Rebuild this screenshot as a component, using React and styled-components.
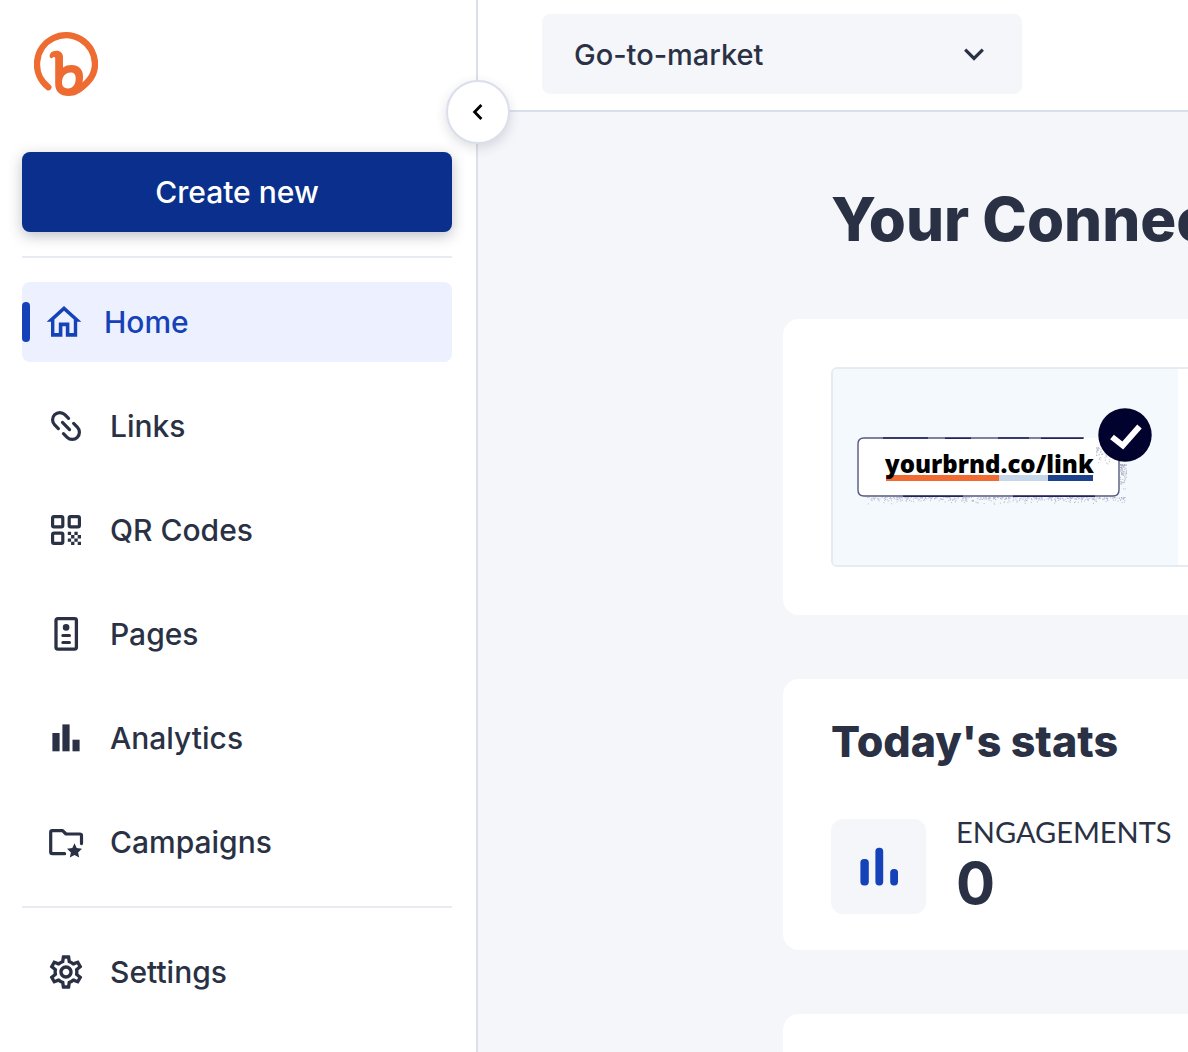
import React from 'react'
import styled, { createGlobalStyle, css } from 'styled-components'
import { MdOutlineSettings } from 'react-icons/md'

const INK = '#2a3144'
const BLUE = '#1542b8'

const LogoIcon = () => (
    <svg width="64" height="64" viewBox="0 0 64 64" aria-hidden="true">
        <path d="M14.3 55.2A29 29 0 1 1 61 32C61 43 54 51.5 44 57.5" fill="none" stroke="#ee6b31" strokeWidth="6.4" strokeLinecap="round" />
        <path
            fill="#ee6b31"
            fillRule="evenodd"
            d="M17.6 26.2C15.6 26.2 15.3 23.8 16 22.2C17.2 19.6 19.6 18.7 22.3 18.7C26.6 18.7 29 21.2 29 25V35.6C31.4 33.8 34.2 33 37.6 33C44.6 33 49 37.2 49 44.4C49 47.4 48.7 50 48 52.6L52.5 55C47.5 60.6 41.6 64 34.6 64C26 64 21.2 59.6 21.2 52V26.6C21.2 25.2 20.6 24.8 19.6 25C18.8 25.2 18.4 26.2 17.6 26.2ZM36.6 40.6C31.4 40.6 28 44.8 28 50.6C28 54.6 30.2 56.4 34 56.4C39 56.4 41.7 52 41.7 46.4C41.7 42.6 40 40.6 36.6 40.6Z"
        />
    </svg>
)

const HomeIcon = () => (
    <svg width="40" height="40" viewBox="0 0 40 40" aria-hidden="true">
        <path
            fill="currentColor"
            fillRule="evenodd"
            d="M20 4L2.6 19.8H7V34.7H18.4V24.2H21.8V34.7H33.2V19.8H37.4ZM20 8.7L29.8 17.4V31.1H25.4V20.4H14.8V31.1H10.4V17.4Z"
        />
    </svg>
)

const LinkIcon = () => (
    <svg width="40" height="40" viewBox="-20 -20 40 40" fill="none" stroke="currentColor" strokeWidth="3.2" strokeLinecap="round" aria-hidden="true">
        <g transform="rotate(45)">
            <path d="M-3.6 -7.2H-8.8A7.2 7.2 0 0 0 -8.8 7.2H-3.6" />
            <path d="M3.6 -7.2H8.8A7.2 7.2 0 0 1 8.8 7.2H3.6" />
            <path d="M-5 0H5" />
        </g>
    </svg>
)

const QrIcon = () => (
    <svg width="40" height="40" viewBox="0 0 40 40" aria-hidden="true">
        <g fill="none" stroke="currentColor" strokeWidth="3.2">
            <rect x="6.6" y="6.6" width="10.2" height="10.2" rx="1.4" />
            <rect x="23.2" y="6.6" width="10.2" height="10.2" rx="1.4" />
            <rect x="6.6" y="23.2" width="10.2" height="10.2" rx="1.4" />
        </g>
        <path
            fill="currentColor"
            d="M21.8 21.8h3.3v3.3h-3.3zM28.4 21.8h3.3v3.3h-3.3zM25.1 25.1h3.3v3.3h-3.3zM31.7 25.1h3.3v3.3h-3.3zM21.8 28.4h3.3v3.3h-3.3zM28.4 28.4h3.3v3.3h-3.3zM25.1 31.7h3.3v3.3h-3.3zM31.7 31.7h3.3v3.3h-3.3z"
        />
    </svg>
)

const PagesIcon = () => (
    <svg width="40" height="40" viewBox="0 0 40 40" fill="none" stroke="currentColor" strokeWidth="3.3" aria-hidden="true">
        <rect x="10" y="4.7" width="20.4" height="30.4" rx="1.8" />
        <circle cx="20.1" cy="13.4" r="3.3" fill="currentColor" stroke="none" />
        <path d="M16.8 21.4H23.5M16.8 28.4H23.5" strokeWidth="3" strokeLinecap="round" />
    </svg>
)

const AnalyticsIcon = () => (
    <svg width="40" height="40" viewBox="0 0 40 40" fill="currentColor" aria-hidden="true">
        <rect x="6.4" y="15" width="7.2" height="18.3" />
        <rect x="16.4" y="6.4" width="7.2" height="26.9" />
        <rect x="26.5" y="21.7" width="7.1" height="11.6" />
    </svg>
)

const CampaignsIcon = () => (
    <svg width="40" height="40" viewBox="0 0 40 40" aria-hidden="true">
        <path
            d="M18.6 31.7H6.4Q4.7 31.7 4.7 30V10.3Q4.7 8.6 6.4 8.6H16.6L20 12H33.8Q35.5 12 35.5 13.7V21.6"
            fill="none"
            stroke="currentColor"
            strokeWidth="3.2"
            strokeLinecap="round"
            strokeLinejoin="round"
        />
        <path fill="currentColor" d="M28.5 21.2L30.7 26.1L36 26.7L32.1 30.4L33.2 35.6L28.5 33L23.8 35.6L24.9 30.4L21 26.7L26.3 26.1Z" />
    </svg>
)

const EngagementIcon = () => (
    <svg width="40" height="40" viewBox="0 0 40 40" fill={BLUE} aria-hidden="true">
        <rect x="1.4" y="12" width="8.4" height="26.4" rx="3.6" />
        <rect x="16.4" y="0.8" width="7.8" height="37.6" rx="3.6" />
        <rect x="31.2" y="22" width="7.8" height="16.4" rx="3.6" />
    </svg>
)

// stippled shadow, seeded so it looks the same on each render
const makeDots = (count, left, top, width, height, seed) => {
    let s = seed
    const rand = () => {
        s = (s * 16807) % 2147483647
        return s / 2147483647
    }
    return Array.from({ length: count }, () => [left + rand() * width, top + rand() * rand() * height])
}

const dots = [
    ...makeDots(420, 34, 128, 258, 7, 77),
    ...makeDots(90, 287, 95, 6, 36, 913),
    ...makeDots(70, 263, 78, 14, 20, 41),
]

const LinkIllustration = () => (
    <svg width="345" height="196" viewBox="0 0 345 196" role="img" aria-label="yourbrnd.co/link">
        <path d="M31 69H280Q286 69 286 75V121Q286 127 280 127H31Q25 127 25 121V75Q25 69 31 69Z" fill="#fff" />
        <path d="M251 69H31Q25 69 25 75V121Q25 127 31 127H280Q286 127 286 121V84" fill="none" stroke="#55577f" strokeWidth="1.4" />
        <path d="M50 69H95M112 69.2H138M165 69H196M208 69.2H250M70 127.2H130M180 127.2H262" stroke="#22245a" strokeWidth="1.5" />
        <g fill="#03053a" opacity="0.3">
            {dots.map(([x, y], i) => (
                <rect key={i} x={x} y={y} width="0.9" height="0.9" />
            ))}
        </g>
        <rect x="53" y="106" width="113" height="6" fill="#f26b32" />
        <rect x="166" y="106" width="49" height="6" fill="#c5d6e8" />
        <rect x="215" y="106" width="45" height="6" fill="#1c428b" />
        <Brand x="52" y="104">yourbrnd.co/link</Brand>
        <circle cx="292" cy="66" r="26.7" fill="#02022f" />
        <path d="M279 68L289.8 76.5L306.5 57.5" fill="none" stroke="#fff" strokeWidth="6" />
    </svg>
)

const navItems = [
    { name: 'Home', icon: HomeIcon, active: true },
    { name: 'Links', icon: LinkIcon },
    { name: 'QR Codes', icon: QrIcon },
    { name: 'Pages', icon: PagesIcon },
    { name: 'Analytics', icon: AnalyticsIcon },
    { name: 'Campaigns', icon: CampaignsIcon },
]

export default function App() {
    return (
        <Layout>
            <GlobalStyle />
            <Sidebar>
                <LogoLink href="#" aria-label="Bitly">
                    <LogoIcon />
                </LogoLink>
                <ToggleButton type="button" aria-label="Collapse menu">
                    <svg width="16" height="20" viewBox="0 0 16 20" fill="none" stroke="#000" strokeWidth="2.8" aria-hidden="true">
                        <path d="M11.4 3L4.6 10L11.4 17" />
                    </svg>
                </ToggleButton>
                <CreateButton type="button">Create new</CreateButton>
                <Divider />
                <Nav>
                    {navItems.map(({ name, icon: Icon, active }) => (
                        <NavLink key={name} href="#" $active={active}>
                            <Icon />
                            {name}
                        </NavLink>
                    ))}
                </Nav>
                <Divider />
                <Nav>
                    <NavLink href="#">
                        <MdOutlineSettings size={40} />
                        Settings
                    </NavLink>
                </Nav>
            </Sidebar>
            <Main>
                <TopBar>
                    <SelectWrapper>
                        <GroupSelect aria-label="Group" defaultValue="gtm">
                            <option value="gtm">Go-to-market</option>
                        </GroupSelect>
                        <svg width="24" height="24" viewBox="0 0 24 24" fill="none" stroke={INK} strokeWidth="3.2" aria-hidden="true">
                            <path d="M3.2 7.6L12 16.4L20.8 7.6" />
                        </svg>
                    </SelectWrapper>
                </TopBar>
                <Content>
                    <PageTitle>Your Connections Platform</PageTitle>
                    <Card>
                        <Promo>
                            <PromoPicture>
                                <LinkIllustration />
                            </PromoPicture>
                        </Promo>
                    </Card>
                    <Card $compact>
                        <CardTitle>Today's stats</CardTitle>
                        <Stat>
                            <StatIcon>
                                <EngagementIcon />
                            </StatIcon>
                            <div>
                                <StatLabel>ENGAGEMENTS</StatLabel>
                                <StatValue>0</StatValue>
                            </div>
                        </Stat>
                    </Card>
                    <Card />
                </Content>
            </Main>
        </Layout>
    )
}

const GlobalStyle = createGlobalStyle`
    *, *::before, *::after {
        box-sizing: border-box;
    }
    body {
        margin: 0;
        background: #f4f6fa;
        color: ${INK};
        font-family: Inter, "Open Sans", sans-serif;
    }
    button, select {
        font-family: inherit;
    }
    h1, h2, p {
        margin: 0;
    }
    svg {
        display: block;
        flex: none;
    }
`

const Layout = styled.div`
    display: flex;
    height: 100vh;
    overflow: hidden;
`

const Sidebar = styled.aside`
    position: relative;
    z-index: 1;
    flex: none;
    width: 478px;
    padding: 32px 24px 0 22px;
    background: #fff;
    border-right: 2px solid #dbdfeb;
`

const LogoLink = styled.a`
    display: block;
    width: 64px;
    margin: 0 0 56px 12px;
`

const ToggleButton = styled.button`
    position: absolute;
    top: 80px;
    right: -34px;
    display: flex;
    align-items: center;
    justify-content: center;
    width: 64px;
    height: 64px;
    padding: 0;
    background: #fff;
    border: 2px solid #dbdfeb;
    border-radius: 50%;
    box-shadow: 0 4px 12px rgba(42, 49, 68, 0.16);
`

const CreateButton = styled.button`
    display: block;
    width: 100%;
    height: 80px;
    padding: 0;
    background: #0a2f8c;
    color: #fff;
    border: 0;
    border-radius: 8px;
    box-shadow: 0 4px 14px rgba(42, 49, 68, 0.3);
    font-size: 30px;
    font-weight: 500;
    line-height: 40px;
`

const Divider = styled.hr`
    height: 2px;
    margin: 24px 0;
    background: #e8ebf2;
    border: 0;
`

const Nav = styled.nav`
    display: flex;
    flex-direction: column;
    gap: 24px;
`

const NavLink = styled.a`
    position: relative;
    display: flex;
    align-items: center;
    gap: 24px;
    height: 80px;
    padding-left: 24px;
    border-radius: 8px;
    color: ${INK};
    font-size: 30px;
    font-weight: 500;
    line-height: 40px;
    text-decoration: none;
    ${({ $active }) => $active && css`
        gap: 20px;
        padding-left: 22px;
        background: #edf1ff;
        color: ${BLUE};
        &::before {
            content: '';
            position: absolute;
            left: 0;
            width: 8px;
            height: 40px;
            background: ${BLUE};
            border-radius: 4px;
        }
    `}
`

const Main = styled.main`
    flex: 1;
    min-width: 0;
    overflow: hidden;
`

const TopBar = styled.header`
    height: 112px;
    padding: 14px 64px;
    background: #fff;
    border-bottom: 2px solid #dbdfeb;
`

const SelectWrapper = styled.div`
    position: relative;
    max-width: 480px;
    svg {
        position: absolute;
        top: 28px;
        right: 36px;
        pointer-events: none;
    }
`

const GroupSelect = styled.select`
    appearance: none;
    width: 100%;
    height: 80px;
    padding: 0 72px 0 32px;
    background: #f4f6fa;
    color: ${INK};
    border: 0;
    border-radius: 8px;
    font-size: 29px;
    font-weight: 500;
`

const Content = styled.div`
    display: flex;
    flex-direction: column;
    gap: 64px;
    min-width: 1600px;
    padding: 71px 305px;
`

const PageTitle = styled.h1`
    padding-left: 48px;
    font-size: 60px;
    font-weight: 800;
    line-height: 72px;
    white-space: nowrap;
`

const Card = styled.section`
    min-height: 240px;
    padding: ${({ $compact }) => ($compact ? '32px 48px 28px' : '48px')};
    background: #fff;
    border-radius: 16px;
`

const Promo = styled.div`
    display: flex;
    border: 2px solid #e6ebf2;
    border-radius: 6px;
    overflow: hidden;
`

const PromoPicture = styled.div`
    background: #f4f9fe;
`

const Brand = styled.text`
    font-family: "Open Sans", "Noto Sans", sans-serif;
    font-size: 24px;
    font-weight: 800;
    fill: #000;
`

const CardTitle = styled.h2`
    margin-bottom: 48px;
    font-size: 43px;
    font-weight: 800;
    line-height: 60px;
`

const Stat = styled.div`
    display: flex;
    gap: 30px;
`

const StatIcon = styled.div`
    display: flex;
    align-items: center;
    justify-content: center;
    width: 95px;
    height: 95px;
    background: #f4f6fa;
    border-radius: 12px;
`

const StatLabel = styled.p`
    font-family: Lato, sans-serif;
    font-size: 29px;
    line-height: 26px;
`

const StatValue = styled.p`
    font-size: 58px;
    font-weight: 700;
    line-height: 77px;
`
